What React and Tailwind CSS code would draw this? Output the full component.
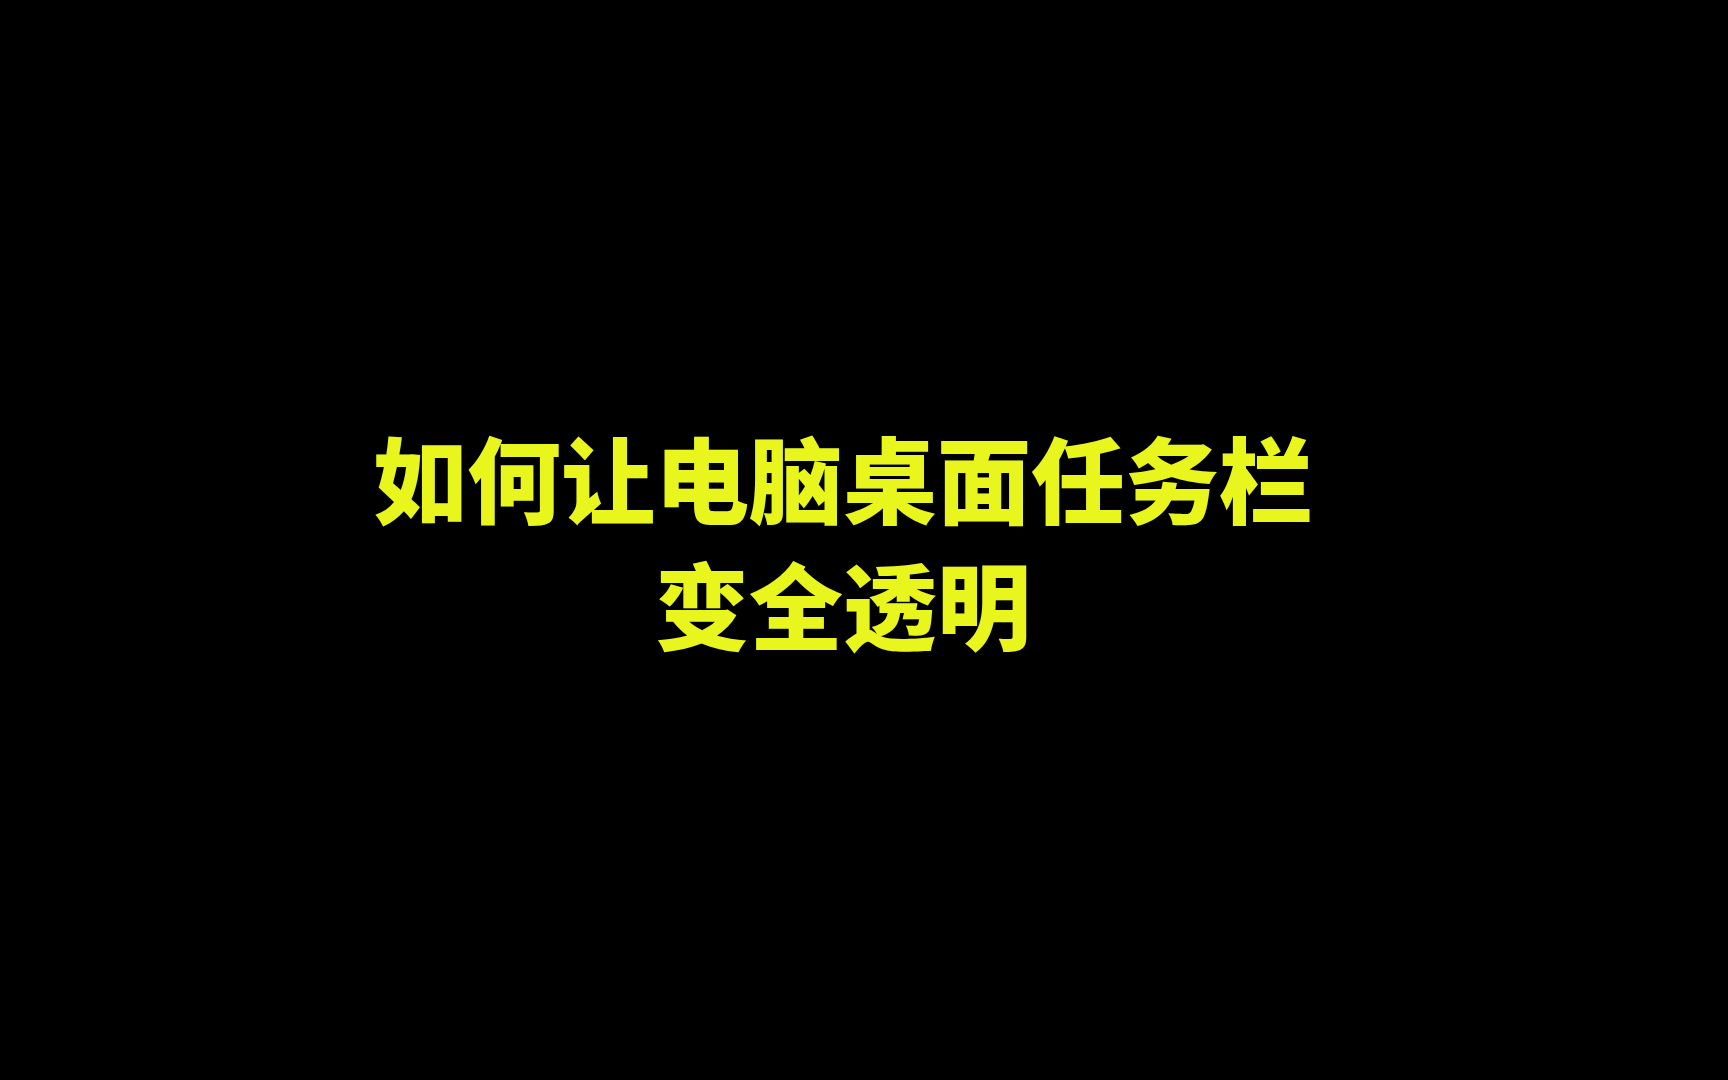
import React from "react";

const App = () => {
  return (
    <div className="h-[1080px] w-full bg-black flex items-center justify-center pr-[42px] pb-[2px]">
      <h1
        className="text-center font-black text-[#e9f61e] text-[94px] leading-[126px]"
        style={{ fontFamily: '"Noto Sans CJK SC", "Noto Sans", sans-serif' }}
      >
        如何让电脑桌面任务栏
        <br />
        变全透明
      </h1>
    </div>
  );
};

export default App;
